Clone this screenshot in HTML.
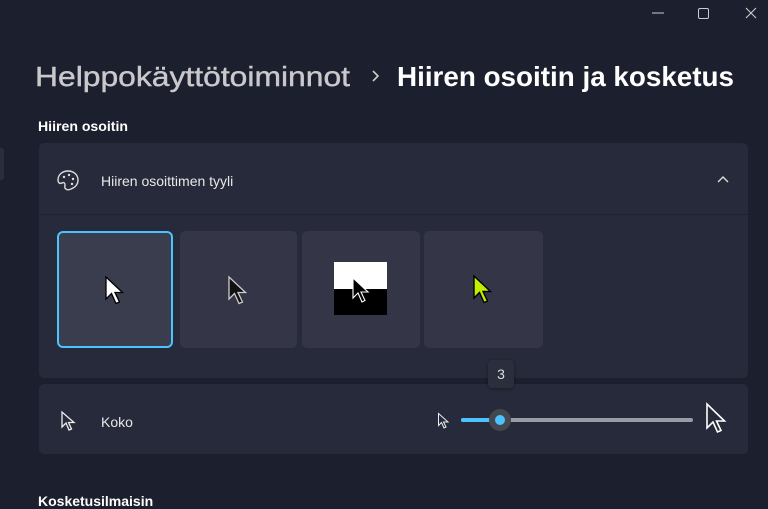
<!DOCTYPE html>
<html><head><meta charset="utf-8"><style>
body{margin:0;width:768px;height:500px;overflow:hidden;background:#1c1f2d;font-family:"Liberation Sans",sans-serif;color:#fff;position:relative}
.a{position:absolute}
.card{position:absolute;background:#272a3a;border-radius:5px}
.tile{position:absolute;background:#343647;border-radius:5px;top:231px;height:117px}
</style></head><body>
<div class="a" style="left:0;top:148px;width:4px;height:32px;background:#2a2d3b;border-radius:0 3px 3px 0"></div>
<svg class="a" style="left:0;top:0" width="768" height="140">
<line x1="652" y1="13" x2="664" y2="13" stroke="#ccc" stroke-width="1"/>
<rect x="698.5" y="8.5" width="10" height="10" rx="1.5" fill="none" stroke="#ccc"/>
<path d="M746 8l10 10M756 8l-10 10" stroke="#ccc" stroke-width="1.1"/>
<text x="35" y="86" font-family="Liberation Sans" font-size="28" fill="#c9c9cc" stroke="#c9c9cc" stroke-width="0.4" textLength="315" lengthAdjust="spacingAndGlyphs">Helppokäyttötoiminnot</text>
<path d="M373 71l5 5-5 5" stroke="#ccc" stroke-width="1.6" fill="none"/>
<text x="397" y="86" font-family="Liberation Sans" font-weight="bold" font-size="28" fill="#fff" textLength="337" lengthAdjust="spacingAndGlyphs">Hiiren osoitin ja kosketus</text>
<text x="38" y="131" font-family="Liberation Sans" font-weight="bold" font-size="14" fill="#fff" textLength="90" lengthAdjust="spacingAndGlyphs">Hiiren osoitin</text>
</svg>
<div class="card" style="left:39px;top:143px;width:709px;height:235px"></div>
<div class="a" style="left:39px;top:214px;width:709px;height:1px;background:#1f2230"></div>
<svg class="a" style="left:56px;top:169px" width="24" height="24" viewBox="0 0 24 24"><path d="M12 2C6 2 2 6 2 11c0 3 2 4 4 3s3 0 3 2-1 3 1 4c1 1 3 1 5 0 5-2 7-5 7-9 0-5-4-9-10-9z" fill="none" stroke="#ddd" stroke-width="1.4"/><circle cx="8" cy="8" r="1.2" fill="#ddd"/><circle cx="13" cy="6" r="1.2" fill="#ddd"/><circle cx="17" cy="10" r="1.2" fill="#ddd"/><circle cx="16" cy="15" r="1.2" fill="#ddd"/></svg>
<div class="a" style="left:101px;top:173px;font-size:14px;color:#e8e8e8">Hiiren osoittimen tyyli</div>
<svg class="a" style="left:716px;top:174px" width="14" height="10"><path d="M2 8l5-5 5 5" stroke="#ddd" stroke-width="1.4" fill="none"/></svg>
<div class="tile" style="left:57px;width:116px;background:#3a3d4d;border:2px solid #4cc2ff;box-sizing:border-box;border-radius:6px"></div>
<div class="tile" style="left:180px;width:117px"></div>
<div class="tile" style="left:302px;width:118px"></div>
<div class="tile" style="left:424px;width:119px"></div>
<svg class="a" style="left:104px;top:275px" width="22" height="32"><path d="M2 2v22l5.5-5.5 4.5 10 3.5-1.5-4.5-9.5h7.5z" fill="#fff" stroke="#000" stroke-width="1.3"/></svg>
<svg class="a" style="left:227px;top:275px" width="22" height="32"><path d="M2 2v22l5.5-5.5 4.5 10 3.5-1.5-4.5-9.5h7.5z" fill="#111" stroke="#ccc" stroke-width="1.3"/></svg>
<div class="a" style="left:334px;top:262px;width:53px;height:27px;background:#fff"></div>
<div class="a" style="left:334px;top:289px;width:53px;height:26px;background:#000"></div>
<svg class="a" style="left:351px;top:276px" width="20" height="30"><path d="M2 2v20l5-5 4 9 3-1.5-4-8.5h7z" fill="#000" stroke="#fff" stroke-width="1.1"/></svg>
<svg class="a" style="left:472px;top:274px" width="22" height="32"><path d="M2 2v22l5.5-5.5 4.5 10 3.5-1.5-4.5-9.5h7.5z" fill="#c0f000" stroke="#000" stroke-width="1.4"/></svg>
<div class="card" style="left:39px;top:384px;width:709px;height:70px"></div>
<svg class="a" style="left:60px;top:410px" width="18" height="22"><path d="M2 2v15l4-4 3 7 2.5-1-3-6.5h5.5z" fill="none" stroke="#eee" stroke-width="1.3"/></svg>
<div class="a" style="left:101px;top:414px;font-size:14px;color:#e8e8e8">Koko</div>
<div class="a" style="left:488px;top:360px;width:26px;height:28px;background:#2b2e3c;border-radius:4px;font-size:14px;text-align:center;line-height:28px;color:#ddd;box-shadow:0 1px 3px rgba(0,0,0,.4)">3</div>
<svg class="a" style="left:437px;top:412px" width="14" height="18"><path d="M1.5 1.5v12l3-3 2.5 5.5 2-1-2.5-5h4.5z" fill="none" stroke="#eee" stroke-width="1"/></svg>
<div class="a" style="left:461px;top:418px;width:232px;height:4px;background:#9a9ca3;border-radius:2px"></div>
<div class="a" style="left:461px;top:418px;width:40px;height:4px;background:#4cc2ff;border-radius:2px"></div>
<div class="a" style="left:489px;top:409px;width:22px;height:22px;background:#45474f;border-radius:50%"></div>
<div class="a" style="left:495px;top:415px;width:10px;height:10px;background:#4cc2ff;border-radius:50%"></div>
<svg class="a" style="left:705px;top:402px" width="24" height="32"><path d="M2 2v24l6-6 4.5 10 3.5-1.5-4.5-9.5h8z" fill="none" stroke="#fff" stroke-width="1.6"/></svg>
<div class="a" style="left:38px;top:493px;font-size:14px;font-weight:bold;color:#fff">Kosketusilmaisin</div>
</body></html>
